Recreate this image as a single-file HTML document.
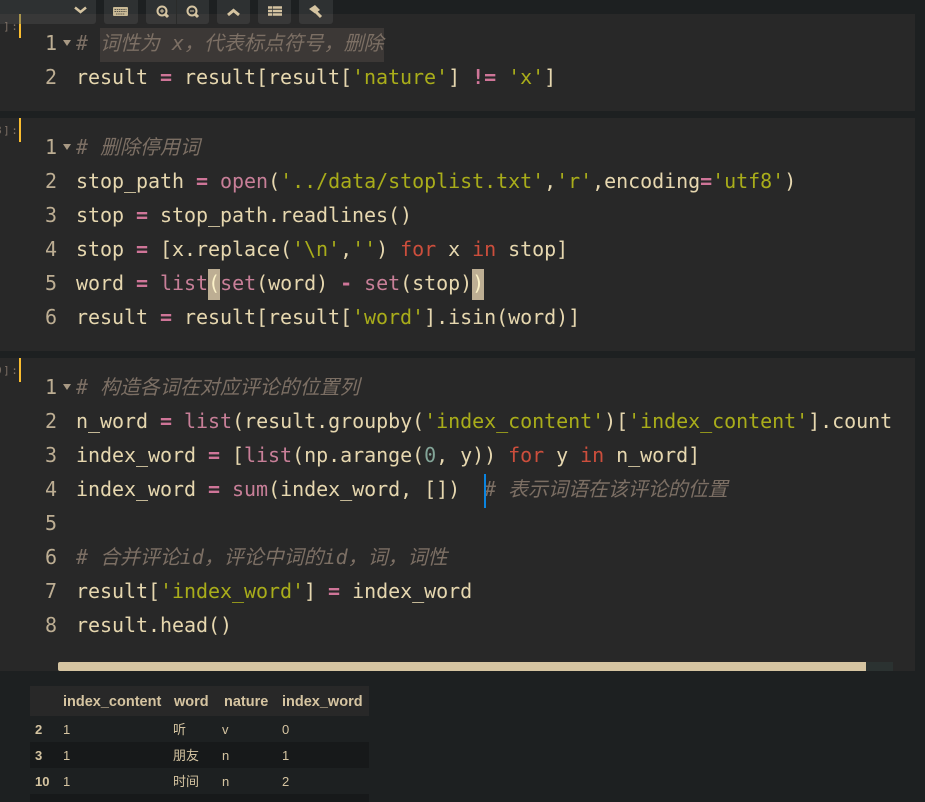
<!DOCTYPE html>
<html><head><meta charset="utf-8"><style>
html,body{margin:0;padding:0;background:#1d2021;width:925px;height:802px;overflow:hidden}
.a{position:absolute}
.cell{position:absolute;left:0;width:915px;background:#282828}
.bar{position:absolute;left:19px;width:2px;background:#fabd2f}
.p{position:absolute;left:-5px;font:11px "DejaVu Sans Mono",monospace;color:#7c6f64;letter-spacing:1.500px}
.l{position:absolute;left:76px;height:34px;line-height:34px;white-space:pre;font:20px/34px "DejaVu Sans Mono","Noto Sans CJK SC",monospace;letter-spacing:-.04px;color:#e6d7af;transform-origin:0 50%}
.n{position:absolute;left:32px;width:25px;text-align:right;font:20px/34px "DejaVu Sans Mono",monospace;color:#bdae93}
.k{color:#c87f98}.o{color:#cf7598;font-weight:bold}.s{color:#a9ad1a}.r{color:#cc4e3c}.c{color:#7c6f64;font-style:italic}.d{color:#83a598}
.tri{position:absolute;left:63px;width:0;height:0;border-left:4px solid transparent;border-right:4px solid transparent;border-top:6px solid #a89984}
.btn{position:absolute;top:-6px;height:30px;background:rgba(255,255,255,.08);border-radius:3px}
.t{position:absolute;font:13px/26px "Liberation Sans","Noto Sans CJK SC",sans-serif;color:#d5c4a1;white-space:pre}
.h{font-weight:bold;font-size:14.500px}
.b{font-weight:bold}
</style></head><body>

<div class="cell" style="top:14px;height:97px"></div>
<div class="cell" style="top:118px;height:233px"></div>
<div class="cell" style="top:358px;height:313px"></div>

<div class="bar" style="top:14px;height:24px"></div>
<div class="bar" style="top:118px;height:24px"></div>
<div class="bar" style="top:358px;height:24px"></div>
<div class="a" style="left:19px;top:14px;width:2px;height:10px;background:#a08a3c"></div>

<div class="btn" style="left:-4px;width:100px"></div>
<div class="btn" style="left:104px;width:34px"></div>
<div class="btn" style="left:146px;width:63px"></div>
<div class="a" style="left:176px;top:0;width:1px;height:24px;background:#2a2b2a"></div>
<div class="btn" style="left:217px;width:33px"></div>
<div class="btn" style="left:258px;width:33px"></div>
<div class="btn" style="left:299px;width:34px"></div>

<svg class="a" style="left:0;top:0" width="340" height="26" fill="none" stroke="#d5c4a1">
<path d="M75 7.500l5.500 4.500 5.500-4.500" stroke-width="2.500"/>
<rect x="113" y="7" width="15" height="9" rx="1" fill="#c9b995" stroke="none"/>
<path d="M114.500 9.500h12M114.500 11.500h12M116 14h9" stroke="#5a564c" stroke-width="1" stroke-dasharray="1.500 .7"/>
<circle cx="162" cy="11" r="4.500" stroke-width="2"/><path d="M165.500 14.500l2.500 2.500" stroke-width="3"/><path d="M160 11h4M162 9v4" stroke-width="1"/>
<circle cx="192" cy="11" r="4.500" stroke-width="2"/><path d="M195.500 14.500l2.500 2.500" stroke-width="3"/><path d="M190 11h4" stroke-width="1"/>
<path d="M228 15l5.500-4.500 5.500 4.500" stroke-width="3"/>
<path d="M268 7.500h14M268 11h14M268 14.500h14" stroke-width="2.400"/>
<path d="M272.500 6v10" stroke="#3c3d3b" stroke-width=".7"/>
<path d="M309 9l6-4 5 5-5 3.500z" fill="#d5c4a1" stroke="none"/>
<path d="M315 11l6 6" stroke-width="3"/>
</svg>

<div class="p" style="top:20px">-]:</div>
<div class="p" style="top:124px">8]:</div>
<div class="p" style="top:364px">0]:</div>

<div class="a" style="left:100px;top:28px;width:284px;height:34px;background:#3c3836"></div>

<div class="n" style="top:26px">1</div><div class="tri" style="top:40px"></div>
<div class="l c" style="top:26px"># 词性为 x，代表标点符号，删除</div>
<div class="n" style="top:60px">2</div>
<div class="l" style="top:60px">result <span class="o">=</span> result[result[<span class="s">'nature'</span>] <span class="o">!=</span> <span class="s">'x'</span>]</div>

<div class="n" style="top:130px">1</div><div class="tri" style="top:144px"></div>
<div class="l c" style="top:130px"># 删除停用词</div>
<div class="n" style="top:164px">2</div>
<div class="l" style="top:164px">stop_path <span class="o">=</span> <span class="k">open</span>(<span class="s">'../data/stoplist.txt'</span>,<span class="s">'r'</span>,encoding<span class="o">=</span><span class="s">'utf8'</span>)</div>
<div class="n" style="top:198px">3</div>
<div class="l" style="top:198px">stop <span class="o">=</span> stop_path.readlines()</div>
<div class="n" style="top:232px">4</div>
<div class="l" style="top:232px">stop <span class="o">=</span> [x.replace(<span class="s">'\n'</span>,<span class="s">''</span>) <span class="r">for</span> x <span class="r">in</span> stop]</div>
<div class="n" style="top:266px">5</div>
<div class="a" style="left:208px;top:269px;width:12px;height:31px;background:#bdae93"></div>
<div class="a" style="left:472px;top:269px;width:12px;height:31px;background:#bdae93"></div>
<div class="l" style="top:266px">word <span class="o">=</span> <span class="k">list</span><span style="color:#fbf1c7">(</span><span class="k">set</span>(word) <span class="o">-</span> <span class="k">set</span>(stop)<span style="color:#fbf1c7">)</span></div>
<div class="n" style="top:300px">6</div>
<div class="l" style="top:300px">result <span class="o">=</span> result[result[<span class="s">'word'</span>].isin(word)]</div>

<div class="n" style="top:370px">1</div><div class="tri" style="top:384px"></div>
<div class="l c" style="top:370px"># 构造各词在对应评论的位置列</div>
<div class="n" style="top:404px">2</div>
<div class="l" style="top:404px;width:815px;overflow:hidden">n_word <span class="o">=</span> <span class="k">list</span>(result.groupby(<span class="s">'index_content'</span>)[<span class="s">'index_content'</span>].count</div>
<div class="n" style="top:438px">3</div>
<div class="l" style="top:438px">index_word <span class="o">=</span> [<span class="k">list</span>(np.arange(<span class="d">0</span>, y)) <span class="r">for</span> y <span class="r">in</span> n_word]</div>
<div class="n" style="top:472px">4</div>
<div class="l" style="top:472px">index_word <span class="o">=</span> <span class="k">sum</span>(index_word, [])  <span class="c"># 表示词语在该评论的位置</span></div>
<div class="a" style="left:484px;top:474px;width:2px;height:34px;background:#0a84e0"></div>
<div class="n" style="top:506px">5</div>
<div class="n" style="top:540px">6</div>
<div class="l c" style="top:540px"># 合并评论id，评论中词的id，词，词性</div>
<div class="n" style="top:574px">7</div>
<div class="l" style="top:574px">result[<span class="s">'index_word'</span>] <span class="o">=</span> index_word</div>
<div class="n" style="top:608px">8</div>
<div class="l" style="top:608px">result.head()</div>

<div class="a" style="left:866px;top:662px;width:27px;height:9px;background:#2b3231"></div>
<div class="a" style="left:58px;top:662px;width:808px;height:9px;background:#d5c4a1;border-radius:2px 0 0 2px"></div>

<div class="a" style="left:30px;top:686px;width:339px;height:30px;background:#282828"></div>
<div class="a" style="left:30px;top:742px;width:339px;height:26px;background:#17191a"></div>
<div class="a" style="left:30px;top:794px;width:339px;height:8px;background:#17191a"></div>

<div class="t h" style="left:63px;top:689px">index_content</div>
<div class="t h" style="left:174px;top:689px">word</div>
<div class="t h" style="left:224px;top:689px">nature</div>
<div class="t h" style="left:282px;top:689px">index_word</div>

<div class="t b" style="left:35px;top:717px">2</div><div class="t" style="left:63px;top:717px">1</div><div class="t" style="left:173px;top:717px">听</div><div class="t" style="left:222px;top:717px">v</div><div class="t" style="left:282px;top:717px">0</div>
<div class="t b" style="left:35px;top:743px">3</div><div class="t" style="left:63px;top:743px">1</div><div class="t" style="left:173px;top:743px">朋友</div><div class="t" style="left:222px;top:743px">n</div><div class="t" style="left:282px;top:743px">1</div>
<div class="t b" style="left:35px;top:769px">10</div><div class="t" style="left:63px;top:769px">1</div><div class="t" style="left:173px;top:769px">时间</div><div class="t" style="left:222px;top:769px">n</div><div class="t" style="left:282px;top:769px">2</div>
</body></html>
